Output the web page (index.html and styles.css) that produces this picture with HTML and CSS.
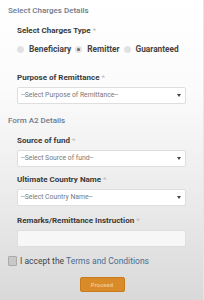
FILE: index.html
```html
<!DOCTYPE html>
<html lang="en">
<head>
    <meta charset="UTF-8">
    <meta name="viewport" content="width=device-width, initial-scale=1.0">
    <title>Remittance</title>
    <link rel="stylesheet" href="styles.css">
</head>
<body>
    <div class="page">
        <h3 class="section-title">Select Charges Details</h3>
        <div class="field">
            <label class="label">Select Charges Type <span class="req">*</span></label>
            <div class="radios">
                <span class="radio"></span><span class="radio-text">Beneficiary</span>
                <span class="radio checked"></span><span class="radio-text">Remitter</span>
                <span class="radio"></span><span class="radio-text">Guaranteed</span>
            </div>
        </div>

        <div class="field purpose">
            <label class="label">Purpose of Remittance <span class="req">*</span></label>
            <div class="select">--Select Purpose of Remittance--<span class="arrow"></span></div>
        </div>

        <h3 class="section-title">Form A2 Details</h3>
        <div class="field">
            <label class="label">Source of fund <span class="req">*</span></label>
            <div class="select">--Select Source of fund--<span class="arrow"></span></div>
        </div>
        <div class="field country">
            <label class="label">Ultimate Country Name <span class="req">*</span></label>
            <div class="select">--Select Country Name--<span class="arrow"></span></div>
        </div>
        <div class="field">
            <label class="label">Remarks/Remittance Instruction <span class="req">*</span></label>
            <div class="input"></div>
        </div>

        <div class="terms">
            <span class="checkbox"></span>
            <span>I accept the <a href="#">Terms and Conditions</a></span>
        </div>

        <div class="actions">
            <button class="btn">Proceed</button>
        </div>
    </div>
</body>
</html>
```

FILE: styles.css
```css
* {
    margin: 0;
    padding: 0;
    box-sizing: border-box;
}

body {
    font-family: Roboto, "Liberation Sans", sans-serif;
    background: linear-gradient(to bottom, #ffffff 0%, #fbfbfb 30%, #e9e9e9 70%, #d9d9d9 100%);
    height: 300px;
    color: #333;
    border-right: 1px solid #e6e6e6;
}

.page {
    padding: 6px 0 0 8px;
}

.section-title {
    font-size: 8px;
    font-weight: 500;
    color: #6d7a8c;
    height: 9px;
    line-height: 9px;
    margin-bottom: 11px;
}

.field {
    padding-left: 9px;
    margin-bottom: 8px;
}

.label {
    display: block;
    font-size: 8px;
    font-weight: bold;
    color: #3a3a3a;
    line-height: 10px;
    margin-bottom: 4px;
}

.req {
    color: #bbb;
    font-weight: normal;
}

.radios {
    display: flex;
    align-items: center;
    font-size: 8.3px;
    font-weight: bold;
    color: #444;
    height: 18px;
}

.radio {
    width: 7px;
    height: 7px;
    border-radius: 50%;
    background: #e2e2e2;
    margin-right: 5px;
    position: relative;
}

.radio.checked::after {
    content: "";
    position: absolute;
    left: 2px;
    top: 2px;
    width: 3px;
    height: 3px;
    border-radius: 50%;
    background: #666;
}

.radio-text {
    margin-right: 4px;
}

.field.purpose {
    margin-top: 15px;
    margin-bottom: 11.5px;
}

.field.country {
    margin-bottom: 10px;
}

.select, .input {
    width: 169px;
    height: 17px;
    border: 1px solid #dedede;
    border-radius: 2px;
    background: #fff;
    font-size: 6.8px;
    color: #777;
    line-height: 15px;
    padding-left: 3px;
    position: relative;
}

.input {
    background: #f7f7f7;
}

.arrow {
    position: absolute;
    right: 4px;
    top: 6px;
    border-left: 2px solid transparent;
    border-right: 2px solid transparent;
    border-top: 3px solid #444;
}

.terms {
    display: flex;
    align-items: center;
    height: 11px;
    font-size: 8.5px;
    color: #444;
    margin-top: 9px;
}

.checkbox {
    width: 9px;
    height: 10px;
    background: #c8c8c8;
    border: 1px solid #aaa;
    border-radius: 1px;
    margin-right: 3px;
}

.terms a {
    color: #4a6c8f;
    text-decoration: none;
}

.actions {
    display: flex;
    justify-content: center;
    padding-right: 7px;
    margin-top: 10px;
}

.btn {
    width: 45px;
    height: 15px;
    background: #d98b29;
    border: 1px solid #c97a1a;
    border-radius: 2px;
    color: #ecc48e;
    font-family: inherit;
    font-size: 6px;
    font-weight: bold;
}
```
